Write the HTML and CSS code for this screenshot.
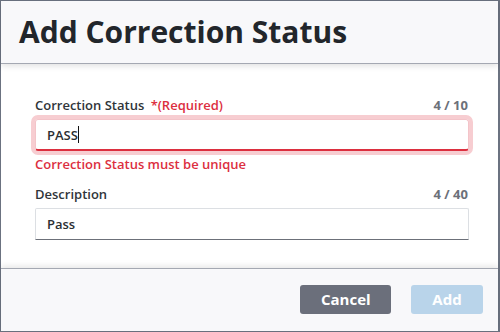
FILE: index.html
```html
<!DOCTYPE html>
<html>
<head>
<meta charset="utf-8">
<link rel="stylesheet" href="styles.css">
</head>
<body>
<div class="modal">
  <header class="modal-header">
    <h1 class="title">Add Correction Status</h1>
  </header>
  <main class="modal-body">
    <div class="field">
      <div class="label-row">
        <span class="label">Correction Status <span class="req">*(Required)</span></span>
        <span class="count">4 / 10</span>
      </div>
      <div class="input invalid"><span class="value">PASS</span><span class="caret"></span></div>
      <div class="error">Correction Status must be unique</div>
    </div>
    <div class="field second">
      <div class="label-row">
        <span class="label">Description</span>
        <span class="count">4 / 40</span>
      </div>
      <div class="input"><span class="value">Pass</span></div>
    </div>
  </main>
  <footer class="modal-footer">
    <button class="btn btn-cancel">Cancel</button>
    <button class="btn btn-add">Add</button>
  </footer>
</div>
</body>
</html>
```

FILE: styles.css
```css
html, body {
  margin: 0;
  padding: 0;
  background: #ffffff;
}
body {
  font-family: "Open Sans", "Liberation Sans", sans-serif;
  color: #343a40;
}
.modal {
  width: 500px;
  height: 332px;
  box-sizing: border-box;
  border: 1px solid #6b7280;
  border-right-width: 2px;
  display: flex;
  flex-direction: column;
  background: #ffffff;
}
.modal-header {
  height: 62px;
  flex: none;
  background: #f8f8fa;
  border-bottom: 1px solid #a4a8b2;
  box-shadow: 0 2px 6px rgba(0, 0, 0, 0.12);
  position: relative;
  z-index: 1;
  display: flex;
  align-items: center;
  padding-left: 18px;
}
.title {
  margin: 0;
  font-size: 30px;
  font-weight: 700;
  color: #22262b;
  line-height: 40px;
  letter-spacing: 0;
}
.modal-body {
  flex: 1;
  min-height: 0;
  padding: 32px 29px 0 34px;
}
.label-row {
  display: flex;
  justify-content: space-between;
  align-items: baseline;
  height: 18px;
  line-height: 18px;
  font-size: 13px;
}
.label {
  font-weight: 600;
  color: #30353a;
}
.req {
  color: #dc2f3f;
  margin-left: 3px;
}
.count {
  font-weight: 700;
  color: #6c7079;
  padding-right: 1px;
}
.input {
  margin-top: 5px;
  height: 32px;
  box-sizing: border-box;
  border: 1px solid #dcdfe3;
  border-bottom: 1px solid #6c7079;
  border-radius: 2px 2px 0 0;
  display: flex;
  align-items: center;
  padding-left: 11px;
  font-size: 13px;
  font-weight: 600;
  color: #2b2f33;
}
.input.invalid {
  border-color: #f3c4c9;
  border-bottom: 2px solid #dc2f3f;
  box-shadow: 0 0 0 4px #f7cdd1;
  border-radius: 3px;
}
.caret {
  display: inline-block;
  width: 1px;
  height: 17px;
  background: #111;
  margin-left: 0;
}
.error {
  margin-top: 4px;
  font-size: 13px;
  line-height: 18px;
  font-weight: 600;
  color: #dc2f3f;
}
.field.second {
  margin-top: 12px;
}
.modal-footer {
  height: 63px;
  box-sizing: border-box;
  flex: none;
  background: #f8f8fa;
  border-top: 1px solid #a4a8b2;
  box-shadow: 0 -2px 6px rgba(0, 0, 0, 0.10);
  display: flex;
  justify-content: flex-end;
  align-items: flex-start;
  gap: 20px;
  padding: 16px 15px 0 0;
}
.btn {
  height: 29px;
  border: none;
  border-radius: 3px;
  font-family: "Open Sans", "Liberation Sans", sans-serif;
  font-size: 15px;
  font-weight: 700;
  color: #ffffff;
  padding: 0 21px;
  line-height: 29px;
}
.btn-cancel {
  background: #6b6f7b;
  width: 91px;
}
.btn-add {
  background: #b9d4ea;
  width: 72px;
}
```
